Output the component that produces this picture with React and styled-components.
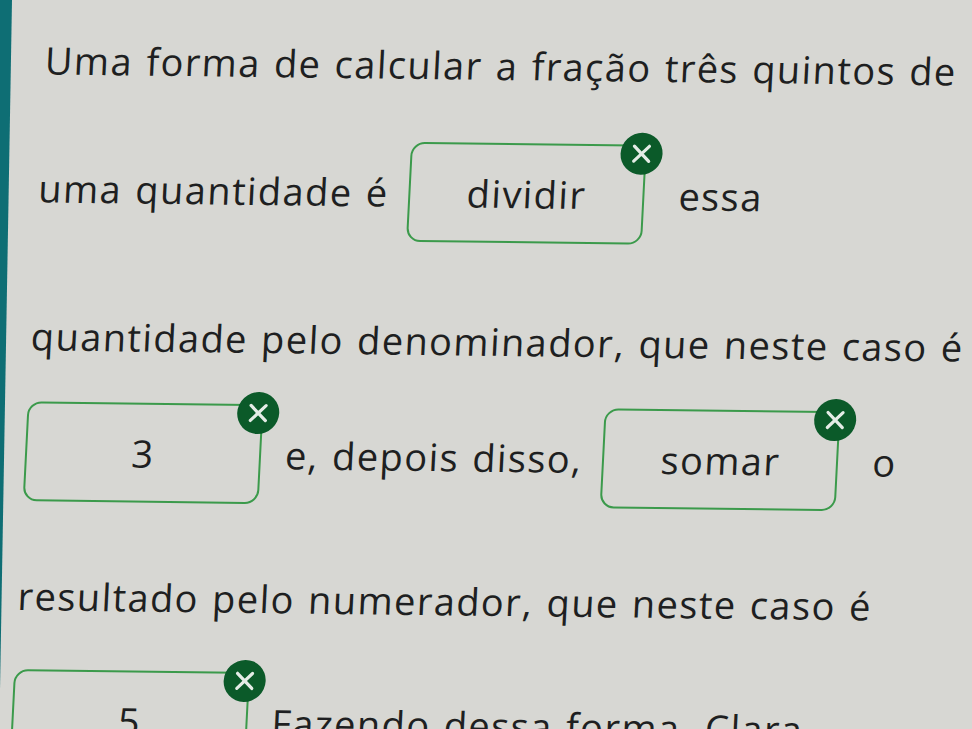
import React from "react";
import styled, { createGlobalStyle } from "styled-components";

const GlobalStyle = createGlobalStyle`
  html, body {
    margin: 0;
    padding: 0;
    background: #d7d7d3;
    overflow: hidden;
  }
  #root {
    height: 729px;
  }
`;

const Page = styled.div`
  display: flex;
  height: 729px;
  overflow: hidden;
  background: #d7d7d3;
`;

const EdgeStrip = styled.div`
  flex: 0 0 12px;
  background: #0e6e74;
  clip-path: polygon(0 0, 12px 0, 0 690px);
`;

const Sheet = styled.div`
  flex: 1;
  display: flex;
  flex-direction: column;
  padding: 29px 0 0 36px;
  font-family: "Open Sans", "Noto Sans", sans-serif;
  font-size: 38px;
  letter-spacing: 1.4px;
  word-spacing: 2px;
  color: #1e1f21;
  transform-origin: 0 0;
  transform: rotate(0.7deg) skewX(-2.2deg);
`;

const Line = styled.div`
  display: flex;
  align-items: center;
  white-space: nowrap;
  height: ${(p) => (p.$withBlank ? "100px" : "60px")};
  margin-top: ${(p) => p.$gap}px;
  flex-shrink: 0;
`;

const Words = styled.span`
  display: inline-block;
`;

const Blank = styled.span`
  position: relative;
  box-sizing: border-box;
  display: inline-flex;
  align-items: center;
  justify-content: center;
  flex: 0 0 236px;
  width: 236px;
  height: 100px;
  margin: 0 34px 0 20px;
  border: 2.5px solid #3b9a4b;
  border-radius: 14px;
  &:first-child {
    margin-left: 0;
    margin-right: 24px;
  }
`;

const RemoveBadge = styled.span`
  position: absolute;
  top: -14px;
  right: -18px;
  width: 42px;
  height: 42px;
  border-radius: 50%;
  background: #0b5a29;
  display: flex;
  align-items: center;
  justify-content: center;
`;

function Remove() {
  return (
    <RemoveBadge>
      <svg width="24" height="24" viewBox="0 0 24 24">
        <path
          d="M4.5 4.5 L19.5 19.5 M19.5 4.5 L4.5 19.5"
          stroke="#e4ece6"
          strokeWidth="3.2"
          strokeLinecap="round"
        />
      </svg>
    </RemoveBadge>
  );
}

function Gap({ children }) {
  return (
    <Blank>
      {children}
      <Remove />
    </Blank>
  );
}

export default function App() {
  return (
    <>
      <GlobalStyle />
      <Page>
        <EdgeStrip />
        <Sheet>
          <Line $gap={0}>
            <Words>Uma forma de calcular a fração três quintos de</Words>
          </Line>
          <Line $withBlank $gap={48}>
            <Words>uma quantidade é</Words>
            <Gap>dividir</Gap>
            <Words>essa</Words>
          </Line>
          <Line $gap={68}>
            <Words>quantidade pelo denominador, que neste caso é</Words>
          </Line>
          <Line $withBlank $gap={36}>
            <Gap>3</Gap>
            <Words>e, depois disso,</Words>
            <Gap>somar</Gap>
            <Words>o</Words>
          </Line>
          <Line $gap={64}>
            <Words>resultado pelo numerador, que neste caso é</Words>
          </Line>
          <Line $withBlank $gap={44}>
            <Gap>5</Gap>
            <Words>Fazendo dessa forma, Clara</Words>
          </Line>
        </Sheet>
      </Page>
    </>
  );
}
